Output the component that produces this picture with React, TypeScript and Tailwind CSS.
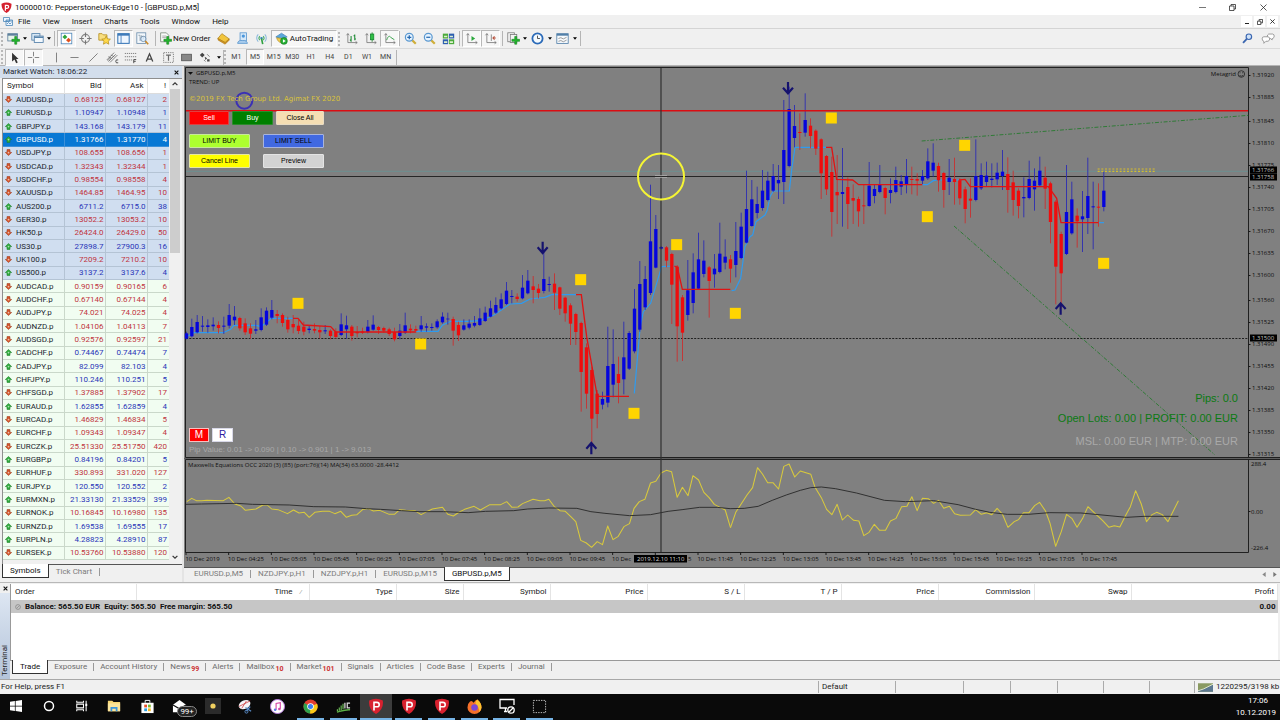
import type { ReactNode } from "react";

type Dir = "B" | "R";
type Candle = [Dir, number, number, number, number];

/* direction, high, body top, body bottom, low - in thirds of a pixel below the plot origin */
const CANDLES: Candle[] = [
  ["B", 815, 820, 836, 838], ["B", 776, 801, 829, 832], ["B", 765, 786, 817, 820], ["B", 768, 797, 800, 815],
  ["B", 778, 796, 801, 818], ["B", 772, 794, 799, 812], ["R", 784, 795, 804, 820], ["B", 770, 797, 800, 822],
  ["B", 732, 765, 797, 805], ["B", 738, 770, 781, 795], ["R", 770, 774, 805, 812], ["R", 775, 790, 817, 825],
  ["R", 790, 805, 821, 836], ["B", 780, 808, 812, 822], ["B", 745, 772, 810, 814], ["B", 742, 752, 794, 798],
  ["B", 720, 750, 773, 778], ["R", 750, 762, 768, 790], ["R", 760, 765, 789, 800], ["R", 770, 780, 808, 818],
  ["R", 765, 792, 802, 820], ["R", 780, 797, 813, 822], ["R", 785, 800, 815, 826], ["B", 795, 806, 810, 820],
  ["R", 790, 807, 812, 820], ["R", 798, 810, 817, 835], ["B", 795, 811, 814, 822], ["R", 808, 812, 828, 838],
  ["R", 805, 815, 831, 836], ["B", 760, 793, 825, 828], ["B", 767, 796, 808, 836], ["R", 795, 800, 828, 842],
  ["R", 798, 816, 820, 832], ["R", 803, 814, 818, 822], ["B", 780, 800, 816, 820], ["B", 766, 794, 809, 812],
  ["R", 798, 801, 810, 822], ["R", 800, 804, 812, 818], ["R", 803, 808, 822, 828], ["R", 803, 816, 838, 844],
  ["B", 792, 812, 828, 838], ["B", 758, 796, 818, 822], ["R", 793, 806, 811, 820], ["R", 797, 807, 812, 818],
  ["B", 768, 796, 808, 815], ["B", 790, 799, 803, 815], ["B", 790, 801, 804, 812], ["B", 778, 784, 802, 806],
  ["B", 757, 770, 787, 791], ["B", 758, 776, 778, 794], ["R", 770, 777, 812, 857], ["R", 785, 795, 826, 843],
  ["B", 778, 796, 809, 812], ["B", 778, 791, 803, 808], ["B", 768, 789, 797, 802], ["B", 745, 775, 795, 798],
  ["B", 740, 758, 783, 786], ["B", 722, 745, 770, 772], ["B", 712, 735, 758, 762], ["B", 700, 718, 745, 748],
  ["B", 666, 692, 732, 735], ["B", 690, 708, 711, 730], ["R", 700, 710, 717, 725], ["B", 645, 683, 715, 718],
  ["B", 630, 662, 700, 703], ["R", 648, 679, 690, 730], ["R", 672, 686, 699, 715], ["B", 575, 657, 693, 700],
  ["B", 650, 672, 675, 695], ["R", 640, 671, 698, 750], ["R", 680, 682, 746, 765], ["R", 710, 713, 760, 785],
  ["R", 730, 736, 791, 855], ["R", 758, 762, 816, 855], ["R", 785, 789, 936, 1055], ["R", 850, 862, 1001, 1046],
  ["R", 920, 930, 1076, 1160], ["R", 990, 1001, 1062, 1105], ["B", 995, 1017, 1034, 1048], ["B", 800, 918, 1028, 1042],
  ["B", 808, 912, 974, 1012], ["R", 890, 942, 969, 1030], ["B", 785, 892, 958, 1003], ["B", 813, 819, 926, 930],
  ["B", 687, 746, 874, 880], ["B", 603, 672, 809, 815], ["B", 618, 657, 742, 750], ["B", 374, 544, 699, 705],
  ["B", 465, 507, 623, 625], ["B", 558, 561, 566, 568], ["R", 558, 562, 602, 622], ["R", 578, 582, 674, 792],
  ["R", 615, 620, 799, 905], ["R", 705, 712, 818, 903], ["B", 600, 691, 765, 782], ["B", 580, 637, 729, 760],
  ["B", 518, 598, 686, 690], ["B", 541, 602, 642, 652], ["R", 618, 622, 663, 773], ["B", 582, 626, 643, 683],
  ["B", 488, 581, 636, 640], ["B", 538, 590, 608, 628], ["R", 585, 598, 626, 668], ["B", 486, 573, 615, 652],
  ["B", 458, 500, 594, 598], ["B", 332, 447, 548, 550], ["B", 360, 418, 498, 500], ["B", 380, 432, 459, 475],
  ["B", 330, 392, 444, 452], ["B", 335, 362, 420, 424], ["B", 312, 348, 392, 396], ["B", 315, 360, 370, 417],
  ["B", 120, 270, 366, 432], ["B", 80, 147, 318, 322], ["B", 135, 198, 234, 262], ["R", 160, 216, 219, 270],
  ["B", 100, 180, 218, 230], ["R", 175, 197, 228, 265], ["R", 208, 212, 266, 285], ["R", 235, 238, 340, 417],
  ["R", 285, 288, 388, 405], ["R", 290, 336, 456, 530], ["R", 285, 396, 406, 492], ["B", 264, 396, 402, 500],
  ["R", 352, 381, 432, 507], ["R", 373, 414, 422, 492], ["R", 410, 417, 454, 500], ["R", 373, 436, 439, 492],
  ["B", 306, 377, 438, 440], ["B", 375, 387, 408, 430], ["B", 315, 372, 396, 400], ["R", 380, 384, 414, 463],
  ["B", 355, 390, 399, 430], ["B", 320, 360, 396, 400], ["B", 345, 364, 380, 405], ["B", 297, 348, 372, 400],
  ["R", 320, 357, 360, 403], ["R", 340, 357, 362, 407], ["B", 330, 348, 362, 372], ["B", 265, 304, 355, 360],
  ["B", 250, 308, 332, 350], ["R", 308, 318, 361, 395], ["R", 335, 339, 390, 443], ["B", 297, 353, 366, 405],
  ["R", 293, 357, 366, 434], ["R", 355, 361, 415, 434], ["R", 380, 388, 447, 490], ["R", 355, 416, 422, 473],
  ["B", 238, 348, 420, 424], ["B", 310, 345, 385, 390], ["B", 305, 347, 366, 380], ["B", 310, 356, 360, 382],
  ["B", 308, 338, 358, 375], ["B", 270, 335, 348, 390], ["R", 292, 342, 390, 458], ["R", 332, 367, 420, 467],
  ["R", 385, 392, 438, 475], ["B", 352, 411, 415, 472], ["B", 302, 357, 414, 418], ["B", 325, 362, 388, 452],
  ["B", 290, 332, 376, 380], ["R", 320, 353, 386, 447], ["R", 365, 370, 486, 550], ["R", 420, 425, 620, 733],
  ["R", 515, 522, 640, 745], ["B", 315, 456, 582, 585], ["B", 365, 418, 520, 524], ["R", 445, 467, 484, 563],
  ["B", 393, 469, 478, 576], ["B", 293, 408, 474, 522], ["B", 365, 439, 442, 568], ["R", 370, 440, 443, 500],
  ["B", 335, 392, 441, 454],
];

const UP_TREND = [
  "8,830 30,818 118,818 140,808 150,796 215,796 232,800 262,775 327,775",
  "695,814 762,814 775,796 800,784 850,784 890,782 930,765 978,732 1013,730 1038,717 1083,712 1103,704 1176,704",
  "1351,1000 1368,805 1378,755 1400,730 1433,620 1471,618",
  "1643,692 1653,690 1670,655 1683,560 1698,530 1706,525 1716,485 1743,465 1750,450 1758,410 1768,393 1816,393 1823,330 1833,262 1926,262",
  "2215,374 2230,374 2248,362 2263,360 2325,360",
  "2743,488 2760,488",
];
const DOWN_TREND = [
  "327,775 342,775 358,795 440,800 455,816 695,816",
  "1176,704 1192,704 1208,830 1240,1009 1335,1009",
  "1471,618 1480,622 1495,688 1639,688",
  "1926,262 1943,262 1958,358 2006,360 2024,374 2215,374",
  "2325,360 2343,358 2359,380 2593,380 2618,415 2631,488 2743,488",
];
const SQUARES = [[342, 730], [710, 852], [1190, 659], [1350, 1060], [1478, 554], [1654, 760], [1942, 174], [2230, 470], [2342, 256], [2759, 610]];
const ARROWS = [[1076, 564, 1], [1812, 85, 1], [1222, 1164, -1], [2630, 745, -1]];

const OSC_LEFT =
  "8,140 22,130 35,137 50,137 65,136 112,137 128,127 145,147 162,153 175,166 205,162 225,150 237,150 250,162 268,164 295,176 312,165 328,174 343,172 357,187 373,172 395,169 415,169 430,176 447,169 463,187 478,181 493,179 510,163 525,161 540,168 558,166 585,178 600,178 615,164 632,166 658,167 676,179 692,170 708,162 737,157 752,178 768,183 785,171 800,163 827,154 845,165 872,149 903,149 920,140 935,157 952,156 965,146 995,133 1015,137 1028,137 1040,133 1055,154 1072,167 1087,169 1102,184 1117,200 1131,256 1147,264 1162,277 1178,260 1193,269 1208,213 1223,254 1238,244 1254,215 1270,206 1283,160 1298,140 1314,133 1330,84 1345,79 1360,54 1375,46 1390,50 1406,127 1421,97 1437,122 1451,62 1467,75 1482,112 1497,128 1512,148 1528,157 1543,165 1558,218";
const OSC_RIGHT =
  "1,218 16,172 48,120 64,98 78,38 92,57 107,83 122,83 138,102 153,34 168,27 184,66 200,48 230,58 242,97 260,128 275,163 290,179 305,148 320,195 335,180 352,196 367,198 381,242 396,232 411,208 426,226 443,226 457,198 473,190 489,155 504,154 518,125 533,167 548,130 565,131 580,145 594,136 609,160 625,154 640,176 656,181 685,180 700,164 716,178 732,173 746,179 761,160 776,177 792,217 810,200 822,194 836,173 852,173 868,152 882,142 899,168 912,205 928,274 944,230 959,178 974,190 989,217 1005,190 1020,155 1040,175 1062,197 1080,217 1095,212 1111,216 1127,182 1141,155 1156,107 1172,147 1187,200 1203,179 1216,172 1232,179 1248,200 1278,137";
const MA_LEFT =
  "5,148 50,147 100,146 150,145 195,148 300,150 370,155 460,156 520,161 560,163 620,167 670,170 740,170 810,173 860,169 940,167 980,162 1040,159 1120,160 1160,170 1200,175 1270,182 1330,179 1380,169 1420,164 1470,157 1520,157 1557,161";
const MA_RIGHT =
  "0,161 40,160 80,154 120,136 160,120 200,106 230,98 260,96 300,101 360,114 440,136 500,140 580,137 650,149 700,163 740,172 790,178 850,178 910,173 1000,174 1060,180 1130,187 1180,184 1278,184";

const PRICES: [string, number][] = [
  ["1.31920", 75], ["1.31885", 97], ["1.31845", 121], ["1.31810", 143], ["1.31775", 165], ["1.31740", 187],
  ["1.31705", 209], ["1.31670", 231], ["1.31635", 253], ["1.31600", 275], ["1.31560", 300], ["1.31525", 322],
  ["1.31490", 344], ["1.31455", 366], ["1.31420", 388], ["1.31385", 410], ["1.31350", 432], ["1.31315", 454],
];
/* the crosshair's time tag covers most of the labels for 10:25 and 11:05 */
const TIMES = [
  "10 Dec 2019", "10 Dec 04:25", "10 Dec 05:05", "10 Dec 05:45", "10 Dec 06:25", "10 Dec 07:05", "10 Dec 07:45", "10 Dec 08:25",
  "10 Dec 09:05", "10 Dec 09:45", "10 Dec", "", "10 Dec 11:45", "10 Dec 12:25", "10 Dec 13:05", "10 Dec 13:45", "10 Dec 14:25",
  "10 Dec 15:05", "10 Dec 15:45", "10 Dec 16:25", "10 Dec 17:05", "10 Dec 17:45",
];
const timeX = (i: number) => 185.4 + i * 42.667;

function PriceChart() {
  return (
    <svg viewBox="184 66 1096 501" className="block h-auto w-full bg-[#808080] font-['Open_Sans',sans-serif]" role="img" aria-label="GBPUSD.p M5 chart">
      <g stroke="#202020" fill="none">
        <path d="M185.5 457.5V67.5H1248.5V457.5M185.5 457.5H1280M185.5 459.5H1280M185.5 459.5V552.5M1248.5 459.5V552.5M185.5 552.5H1248.5" />
        <path d="M186 338.5H1248" strokeDasharray="2 1.3" />
      </g>
      <path d="M184 458.5H1280" stroke="#5e5e5e" />
      <path d="M186 171.3H1248" stroke="#5c9a9c" strokeWidth="0.6" />
      <path d="M186 176.5H1248" stroke="#262626" />

      <g transform="translate(184 60) scale(0.33333)">
        <g fill="none" stroke="#2e9bf0" strokeWidth="3.5">
          {UP_TREND.map((p) => <polyline key={p} points={p} />)}
        </g>
        <g stroke="#1f7a28" strokeWidth="2.5" strokeDasharray="12 5 4 5">
          <path d="M2213 243L3193 166" />
          <path d="M2310 498L3093 1185" />
        </g>
        {CANDLES.map(([dir, high, top, bottom, low], i) => {
          const x = 7.5 + i * 16;
          return (
            <g key={i}>
              <rect x={x - 1.3} y={high} width={2.6} height={low - high} fill={dir === "B" ? "#2a2ab4" : "#cb2e2e"} />
              <rect x={x - 5} y={top} width={10} height={bottom - top} fill={dir === "B" ? "#0505dd" : "#ee0d0d"} />
            </g>
          );
        })}
        <g fill="none" stroke="#e01414" strokeWidth="4">
          {DOWN_TREND.map((p) => <polyline key={p} points={p} />)}
        </g>
        {SQUARES.map(([x, y]) => <rect key={x} x={x - 16.5} y={y - 16.5} width={33} height={33} fill="#ffd500" />)}
        {ARROWS.map(([x, y, s]) => (
          <path key={x} transform={`translate(${x} ${y}) scale(1 ${s})`} d="M0 -19V14M-15 -2L0 15L15 -2" fill="none" stroke="#15126e" strokeWidth="6.5" />
        ))}
        <g stroke="#d6bc2c" strokeWidth="3.5" strokeDasharray="6 5">
          <path d="M2741 327H2916M2741 334H2916" />
        </g>
      </g>
      <path d="M186 110.7H1248" stroke="#da0d12" strokeWidth="1.5" />

      <g transform="translate(184 455) scale(0.35077 0.33333)" fill="none">
        <g stroke="#d8c93c" strokeWidth="3" strokeLinejoin="round">
          <polyline points={OSC_LEFT} />
          <polyline points={OSC_RIGHT} transform="translate(1557 0)" />
        </g>
        <g stroke="#262626" strokeWidth="2.6">
          <polyline points={MA_LEFT} />
          <polyline points={MA_RIGHT} transform="translate(1557 0)" />
        </g>
      </g>

      <path d="M661 68V552" stroke="#303030" strokeWidth="1.2" />
      <circle cx="661" cy="176.5" r="23" fill="none" stroke="#f5f534" strokeWidth="2" />
      <path d="M655 175.5H667M655 177.5H667" stroke="#b4b4b4" strokeWidth="0.7" />
      <circle cx="244.3" cy="100.7" r="8" fill="none" stroke="#3b31b4" strokeWidth="2" />

      <path d="M188 72H193L190.5 74.7Z" fill="#0c0c0c" />
      <g fill="#101010" fontSize="6">
        <text x="196" y="75">GBPUSD.p,M5</text>
        <text x="189" y="84">TREND: UP</text>
        <text x="1236" y="76" textAnchor="end">Metagrid</text>
        <text x="188" y="467">Maxwells Equations OCC 2020 (3) (85) (port:76)(14) MA(34) 63.0000 -28.4412</text>
      </g>
      <g fill="none" stroke="#161616" strokeWidth="0.7">
        <circle cx="1241.3" cy="74" r="3.3" />
        <path d="M1239.5 75C1240.2 76.6 1242.4 76.6 1243.1 75" />
        <path d="M1240 72.3V73.3M1242.6 72.3V73.3" />
      </g>

      {PRICES.map(([label, y]) => (
        <g key={label}>
          <path d={`M1248 ${y + 0.5}H1250.5`} stroke="#1a1a1a" />
          <text x="1252" y={y + 2} fontSize="6" fill="#0c0c0c">{label}</text>
        </g>
      ))}
      {([["1.31766", 170], ["1.31758", 177], ["1.31500", 338]] as [string, number][]).map(([label, y]) => (
        <g key={label}>
          <rect x="1250" y={y - 3.5} width="27" height="7" fill="#000" />
          <text x="1252" y={y + 2} fontSize="6" fill="#c4c4c4">{label}</text>
        </g>
      ))}
      <g fontSize="6" fill="#0c0c0c">
        <text x="1251" y="466">288.4</text>
        <text x="1251" y="514">0.00</text>
        <text x="1251" y="550">-226.4</text>
      </g>
      <path d="M1248 511.5H1250.5" stroke="#1a1a1a" />

      {TIMES.map((label, i) => (
        <g key={i}>
          <path d={`M${timeX(i) + 0.6} 552V555`} stroke="#1a1a1a" />
          {label && <text x={timeX(i)} y="561" fontSize="6" fill="#0c0c0c">{label}</text>}
        </g>
      ))}
      <rect x="634" y="555" width="53" height="7.5" fill="#000" />
      <text x="637" y="561" fontSize="6" fill="#d8d8d8">2019.12.10 11:10</text>
      <text x="688" y="561" fontSize="6" fill="#0c0c0c">5</text>
    </svg>
  );
}

const QUOTES = `AUDUSD 0.68125 0.68127 2 R
EURUSD 1.10947 1.10948 1 B
GBPJPY 143.168 143.179 11 B
GBPUSD 1.31766 1.31770 4 B
USDJPY 108.655 108.656 1 R
USDCAD 1.32343 1.32344 1 R
USDCHF 0.98554 0.98558 4 R
XAUUSD 1464.85 1464.95 10 R
AUS200 6711.2 6715.0 38 B
GER30 13052.2 13053.2 10 R
HK50 26424.0 26429.0 50 R
US30 27898.7 27900.3 16 B
UK100 7209.2 7210.2 10 R
US500 3137.2 3137.6 4 B
AUDCAD 0.90159 0.90165 6 R
AUDCHF 0.67140 0.67144 4 R
AUDJPY 74.021 74.025 4 R
AUDNZD 1.04106 1.04113 7 R
AUDSGD 0.92576 0.92597 21 R
CADCHF 0.74467 0.74474 7 B
CADJPY 82.099 82.103 4 B
CHFJPY 110.246 110.251 5 B
CHFSGD 1.37885 1.37902 17 R
EURAUD 1.62855 1.62859 4 B
EURCAD 1.46829 1.46834 5 R
EURCHF 1.09343 1.09347 4 R
EURCZK 25.51330 25.51750 420 R
EURGBP 0.84196 0.84201 5 B
EURHUF 330.893 331.020 127 R
EURJPY 120.550 120.552 2 B
EURMXN 21.33130 21.33529 399 B
EURNOK 10.16845 10.16980 135 R
EURNZD 1.69538 1.69555 17 B
EURPLN 4.28823 4.28910 87 B
EURSEK 10.53760 10.53880 120 R`.split("\n").map((line) => line.split(" "));

function TickIcon({ up }: { up: boolean }) {
  return (
    <svg viewBox="0 0 12 12" className="size-[7px] shrink-0" aria-hidden="true">
      {up ? (
        <path d="M6 .8L11.4 6L8.5 6.5V11H3.5V6.5L.6 6Z" fill="#2fae3c" stroke="#1f7c2a" />
      ) : (
        <path d="M6 11.2L.6 6L3.5 5.500V1H8.500V5.500L11.400 6Z" fill="#d8552a" stroke="#9c3a1c" />
      )}
      <circle cx="6" cy="6" r="1.5" fill="#fff" opacity=".6" />
    </svg>
  );
}

function MarketWatch() {
  return (
    <section aria-label="Market Watch" className="flex w-[184px] shrink-0 flex-col border-r-2 border-[#e4e4e4] bg-[#f0f0f0]">
      <div className="flex h-[12px] items-center justify-between bg-[#d3deec] pr-[3px] pl-[3px] text-[8px] leading-[10px] text-[#1c2733]">
        <span>Market Watch: 18:06:22</span>
        <button aria-label="Close Market Watch">
          <svg viewBox="0 0 8 8" className="size-[5px]" stroke="#111" strokeWidth="1.8"><path d="M1 1L7 7M7 1L1 7" /></svg>
        </button>
      </div>
      <div className="ml-[2px] flex grow border-t border-l border-[#8e8e8e]">
        <table className="h-[481px] w-[166px] table-fixed border-collapse bg-white text-[8px] leading-[11px]">
          <colgroup>
            <col className="w-[61px]" /><col className="w-[41px]" /><col className="w-[42px]" /><col />
          </colgroup>
          <thead>
            <tr className="border-b border-[#dcdcdc] text-[#222]">
              <th className="h-[14px] border-r border-[#e2e2e2] py-0 pl-[4px] text-left font-normal">Symbol</th>
              <th className="border-r border-[#e2e2e2] py-0 pr-[3px] text-right font-normal">Bid</th>
              <th className="border-r border-[#e2e2e2] py-0 pr-[3px] text-right font-normal">Ask</th>
              <th className="py-0 pr-[3px] text-right font-normal">!</th>
            </tr>
          </thead>
          <tbody>
            {QUOTES.map(([sym, bid, ask, spread, dir], i) => {
              const selected = i === 3;
              const row = selected ? "bg-[#0878d4] text-white" : i < 14 ? "bg-[#d0def0]" : "bg-[#f1fdf1]";
              const num = selected ? "text-white" : dir === "B" ? "text-[#2a35b8]" : "text-[#c03440]";
              const edge = selected ? "border-[#3d90d8]" : i < 14 ? "border-[#b4c3d4]" : "border-[#cad8ca]";
              return (
                <tr key={sym} className={`border-b ${row} ${edge}`}>
                  <td className={`border-r p-0 ${edge}`}>
                    <span className="flex items-center gap-[4px] pl-[2px]">
                      <TickIcon up={dir === "B"} />
                      <span className={selected ? "text-white" : "text-[#22272e]"}>{sym}.p</span>
                    </span>
                  </td>
                  <td className={`border-r py-0 pr-[1px] pl-0 text-right ${edge} ${num}`}>{bid}</td>
                  <td className={`border-r py-0 pr-[1px] pl-0 text-right ${edge} ${num}`}>{ask}</td>
                  <td className={`py-0 pr-[2px] pl-0 text-right ${num}`}>{spread}</td>
                </tr>
              );
            })}
          </tbody>
        </table>
        <div className="flex w-[11px] flex-col items-center bg-[#f0f0f0]">
          <svg viewBox="0 0 10 10" className="my-[2px] size-[6px]" fill="none" stroke="#333" strokeWidth="2"><path d="M1 7L5 3L9 7" /></svg>
          <div className="h-[164px] w-[10px] bg-[#cdcdcd]" />
          <svg viewBox="0 0 10 10" className="mt-auto mb-[4px] size-[6px]" fill="none" stroke="#333" strokeWidth="2"><path d="M1 3L5 7L9 3" /></svg>
        </div>
      </div>
      <div className="ml-[2px] flex h-[18px] items-start border-t border-[#555] text-[8px] leading-[12px]">
        <button className="-mt-px h-[14px] border border-t-0 border-[#333] bg-white px-[7px] text-[#111]">Symbols</button>
        <button className="h-[13px] px-[7px] text-[#7c7c7c]">Tick Chart</button>
        <span className="mt-[3px] h-[8px] w-px bg-[#999]" />
      </div>
    </section>
  );
}

const Ic = ({ children, className = "size-[13px]" }: { children: ReactNode; className?: string }) => (
  <svg viewBox="0 0 16 16" className={className} fill="none" stroke="#6a6a6a" aria-hidden="true">{children}</svg>
);

function Tool({ label, pressed, children, width = "w-[19px]" }: { label: string; pressed?: boolean; children: ReactNode; width?: string }) {
  return (
    <button
      aria-label={label}
      className={`flex h-[17px] shrink-0 items-center justify-center ${width} ${pressed ? "border border-[#b8b8b8] border-r-[#fff] border-b-[#fff] bg-[#f7f7f7]" : ""}`}
    >
      {children}
    </button>
  );
}
const Caret = ({ label }: { label: string }) => (
  <button aria-label={label} className="flex w-[8px] shrink-0 items-center justify-center">
    <svg viewBox="0 0 6 4" className="h-[3px] w-[4px]"><path d="M0 0H6L3 4Z" fill="#000" /></svg>
  </button>
);
const Grip = () => <span className="mx-[1px] h-[14px] w-[3px] shrink-0 border-l-2 border-dotted border-[#b8b8b8]" />;
const Sep = ({ className = "mx-[1px]" }: { className?: string }) => <span className={`h-[15px] w-px shrink-0 bg-[#b5b5b5] ${className}`} />;

const Plus = () => <path d="M9.5 5.5H12V9H15.5V11.5H12V15H9.5V11.5H6V9H9.5Z" fill="#22b52c" stroke="#12831c" strokeWidth=".7" />;
const Axes = () => <path d="M3.5 2V13H15M1.8 4L3.5 2L5.2 4M13 11.5L15 13L13 14.5" stroke="#777" />;

function MainToolbar() {
  return (
    <div className="flex h-[20px] items-center border-t border-[#d4d4d4]">
      <Grip />
      <Tool label="New chart" width="w-[16px]">
        <Ic><rect x="1" y="2" width="12" height="9" fill="#e8f4ea" stroke="#5a7d9a" /><path d="M1 3.5H13" stroke="#5a7d9a" strokeWidth="2" /><Plus /></Ic>
      </Tool>
      <Caret label="New chart options" />
      <Tool label="Profiles" width="w-[16px]">
        <Ic><rect x="1" y="2" width="10" height="8" fill="#dcebf8" stroke="#4c7ba6" /><rect x="4" y="5" width="11" height="8" fill="#f2f8fd" stroke="#4c7ba6" /><path d="M4 6.5H15" stroke="#4c7ba6" strokeWidth="1.6" /></Ic>
      </Tool>
      <Caret label="Profile options" />
      <Sep className="mr-[2px] ml-[1px]" />
      <Tool label="Market Watch" pressed>
        <Ic><rect x="1.5" y="1.5" width="13" height="13" fill="#fff" stroke="#4d87ba" /><path d="M6 3L9 6L6 9L3 6Z" fill="#2ea43a" stroke="none" /><path d="M10.5 7L13.5 10L10.5 13L7.5 10Z" fill="#e0501e" stroke="none" /></Ic>
      </Tool>
      <Tool label="Data Window">
        <Ic><circle cx="8" cy="8" r="5" stroke="#888" strokeWidth="1.4" /><path d="M8 .5V6M8 10V15.5M.5 8H6M10 8H15.5" stroke="#777" strokeWidth="1.4" /></Ic>
      </Tool>
      <Tool label="Navigator">
        <Ic><path d="M1 2H5L6.5 3.5H11V10H1Z" fill="#f9df80" stroke="#b58e1e" /><path d="M10 5L11.6 8.4L15.3 8.8L12.6 11.3L13.3 15L10 13.2L6.7 15L7.4 11.3L4.7 8.8L8.4 8.4Z" fill="#ffd94a" stroke="#b58e1e" strokeWidth=".9" /></Ic>
      </Tool>
      <Tool label="Terminal" pressed>
        <Ic><rect x="1" y="2" width="14" height="12" fill="#eef6ff" stroke="#3a78b8" strokeWidth="1.3" /><path d="M1 3.5H15" stroke="#3a78b8" strokeWidth="2" /><path d="M5 4V14" stroke="#3a78b8" /></Ic>
      </Tool>
      <Tool label="Strategy Tester">
        <Ic><rect x="1" y="1" width="11" height="13" fill="#f3f8fc" stroke="#6b8cab" /><path d="M3 4H5V11M7 4V10M9 5V9" stroke="#8a9aa8" /><circle cx="9" cy="8.5" r="3.3" fill="#dceeff" fillOpacity=".7" stroke="#6a8aa8" /><path d="M11.5 11L15 15" stroke="#c98a2a" strokeWidth="2" /></Ic>
      </Tool>
      <Sep className="mr-[3px] ml-[3px]" />
      <button className="flex h-[17px] w-[55px] shrink-0 items-center gap-[1px] text-[8px] leading-[12px] whitespace-nowrap text-[#111]">
        <Ic><path d="M2 1H9L12 4V12H2Z" fill="#fafafa" stroke="#7a8a7a" /><path d="M4 5H9M4 7H9" stroke="#999" /><Plus /></Ic>
        New Order
      </button>
      <Tool label="MetaEditor">
        <Ic><path d="M6 2L15 8.5L10 13L1 8Z" fill="#f2c53c" stroke="#b58a22" /><path d="M1 8L1.5 10L10 15L15 10V8.5L10 13Z" fill="#d89a20" stroke="#a6741a" strokeWidth=".7" /></Ic>
      </Tool>
      <Tool label="Community">
        <Ic><rect x="5" y="1" width="8" height="10" fill="#d6e8f8" stroke="#5a96ce" /><circle cx="9" cy="5" r="2" fill="#4a96dc" stroke="none" /><path d="M2 14C2 11 5 10 8 10.5C12 10 14 12 14 14Z" fill="#a9cdee" stroke="#5a96ce" /></Ic>
      </Tool>
      <Tool label="Signals">
        <Ic><path d="M4 12C1.5 9.500 1.500 5.500 4 3M12 3C14.500 5.500 14.500 9.500 12 12" stroke="#8ab8dc" strokeWidth="1.3" /><path d="M6 10C4.5 8.500 4.500 6.500 6 5M10 5C11.500 6.500 11.500 8.500 10 10" stroke="#4fae6c" strokeWidth="1.3" /><circle cx="8" cy="7.5" r="1.5" fill="#2f80c0" stroke="none" /><path d="M8 8L9.5 15" stroke="#2fa040" strokeWidth="2" /></Ic>
      </Tool>
      <button className="flex h-[17px] w-[66px] shrink-0 items-center justify-center gap-[2px] border border-[#b8b8b8] border-r-[#fff] border-b-[#fff] bg-[#f7f7f7] text-[8px] leading-[12px] text-[#111]">
        <Ic><path d="M1 6L8 1.500L15 6L8 9Z" fill="#5aa8dc" stroke="#3c7cb4" strokeWidth=".8" /><path d="M2 7C3 12 7 14 10 13L9 8Z" fill="#f0cc50" stroke="#b08c2a" strokeWidth=".8" /><circle cx="11" cy="11" r="4.2" fill="#25b035" stroke="#14751f" strokeWidth=".7" /><path d="M9.8 8.800V13.200L13.200 11Z" fill="#fff" stroke="none" /></Ic>
        AutoTrading
      </button>
      <Grip />
      <Tool label="Bar chart"><Ic><Axes /><path d="M7.5 5V12M6 10H7.5M12 3V10M10.500 4.500H12M12 8.500H13.500" stroke="#1d8a34" strokeWidth="1.3" /></Ic></Tool>
      <Tool label="Candlesticks"><Ic><Axes /><path d="M10 .5V12" stroke="#14751f" /><rect x="8" y="2.5" width="4" height="7" fill="#2fbf45" stroke="#148a2f" /></Ic></Tool>
      <Tool label="Line chart" pressed><Ic><Axes /><path d="M4.5 10C6 5 8 4 10 7L14 9.500" stroke="#3aa04c" strokeWidth="1.2" /></Ic></Tool>
      <Sep className="mr-[1px]" />
      <Tool label="Zoom in"><Ic><path d="M9.5 9.500L14.500 14.500" stroke="#cfae3a" strokeWidth="2.8" /><circle cx="6.5" cy="6.5" r="4.8" fill="#e6f3ff" stroke="#5a98d0" strokeWidth="1.5" /><path d="M4 6.5H9M6.500 4V9" stroke="#2468b0" strokeWidth="1.5" /></Ic></Tool>
      <Tool label="Zoom out"><Ic><path d="M9.5 9.500L14.500 14.500" stroke="#cfae3a" strokeWidth="2.8" /><circle cx="6.5" cy="6.5" r="4.8" fill="#e6f3ff" stroke="#5a98d0" strokeWidth="1.5" /><path d="M4 6.5H9" stroke="#2468b0" strokeWidth="1.5" /></Ic></Tool>
      <Tool label="Tile windows"><Ic><g stroke="none"><path d="M1 2H7.5V8H1Z" fill="#4cab3c" /><path d="M8.5 2H15V8H8.500Z" fill="#2e5fb0" /><path d="M1 9H7.5V15H1Z" fill="#2e5fb0" /><path d="M8.5 9H15V15H8.500Z" fill="#4cab3c" /><path d="M2.5 4.500H6.500V6.500H2.500ZM9.500 4.500H13.500V6.500H9.500ZM2.500 11.500H6.500V13.500H2.500ZM9.500 11.500H13.500V13.500H9.500Z" fill="#dff0d0" /></g></Ic></Tool>
      <Sep className="mr-[2px] ml-[1px]" />
      <Tool label="Auto scroll" pressed><Ic><Axes /><path d="M8 5V11L12.500 8Z" fill="#2aa83c" stroke="none" /></Ic></Tool>
      <Tool label="Chart shift" pressed><Ic><Axes /><path d="M9 3V11" stroke="#777" /><path d="M14.5 7.500H11.500M13 5.500L11 7.500L13 9.500" stroke="#b85540" strokeWidth="1.3" /></Ic></Tool>
      <Sep className="mr-[2px] ml-[2px]" />
      <Tool label="Indicators" width="w-[16px]"><Ic><rect x="1" y="1" width="8" height="11" fill="#fff" stroke="#777" /><rect x="4" y="3" width="8" height="10" fill="#f4f4f4" stroke="#777" /><Plus /></Ic></Tool>
      <Caret label="Indicator options" />
      <Tool label="Periods" width="w-[17px]"><Ic><circle cx="8" cy="8" r="6.3" fill="#f4faff" stroke="#2a6ab8" strokeWidth="2.2" /><path d="M8 4.5V8H11" stroke="#333" /></Ic></Tool>
      <Caret label="Period options" />
      <Tool label="Templates" width="w-[17px]"><Ic><rect x="1" y="2" width="14" height="12" fill="#f6fafd" stroke="#4c7ba6" /><path d="M1 3.5H15" stroke="#4c7ba6" strokeWidth="2" /><path d="M3 8L6 7L9 8.500L13 6.500M3 11.500L6 10.500L9 12L13 10" stroke="#888" /></Ic></Tool>
      <Caret label="Template options" />
      <Sep />
      <span className="ml-auto flex items-center gap-[8px] pr-[5px]">
        <button aria-label="Search"><Ic className="size-[11px]"><circle cx="10" cy="5.5" r="4" fill="#cfe2f8" stroke="#3a66b0" strokeWidth="1.7" /><path d="M7 8.5L1.500 14.500" stroke="#3a66b0" strokeWidth="2.6" /></Ic></button>
        <button aria-label="Messages"><svg viewBox="0 0 20 16" className="h-[11px] w-[14px]" fill="#fff" stroke="#777"><path d="M11 1.5H17Q19 2 19 4.500T17 8H16V10L13.500 8H11Q9 7.500 9 5T11 1.500Z" /><path d="M4 5.5H10Q12.500 6 12.500 8.500T10 12H7L4 15V12Q1.500 11.500 1.500 8.500T4 5.500Z" /></svg></button>
      </span>
    </div>
  );
}

const PERIODS = ["M1", "M5", "M15", "M30", "H1", "H4", "D1", "W1", "MN"];

function LineToolbar() {
  return (
    <div className="flex h-[18px] items-center border-t border-b border-t-[#dadada] border-b-[#b4b4b4]">
      <Grip />
      <Tool label="Cursor" pressed><Ic><path d="M5 2V13L8 10.500L10 15L12 14L10 9.800H13Z" fill="#333" stroke="none" /></Ic></Tool>
      <Tool label="Crosshair" pressed><Ic><path d="M8 1V6.5M8 9.500V15M1 8H6.500M9.500 8H15" /></Ic></Tool>
      <div className="ml-[4px] grid w-[168px] shrink-0 grid-cols-9">
        <Tool width="w-full" label="Vertical line"><Ic><path d="M8 2V14" /></Ic></Tool>
        <Tool width="w-full" label="Horizontal line"><Ic><path d="M3 8H13" /></Ic></Tool>
        <Tool width="w-full" label="Trendline"><Ic><path d="M3 13L13 3" /></Ic></Tool>
        <Tool width="w-full" label="Equidistant channel"><Ic><path d="M1 11L10 2M3 13L12 4M5 14L14 5M3 7L7 9M6 5L10 7M2 12L6 8" /><path d="M15 11Q12 10 12 12.7T15 14.500" stroke="#333" /></Ic></Tool>
        <Tool width="w-full" label="Fibonacci retracement"><Ic><path d="M1 3H15M1 7H15M1 11H10" strokeDasharray="1.5 1" /><path d="M12 15V10.5H15M12 12.700H14.500" stroke="#333" /></Ic></Tool>
        <Tool width="w-full" label="Text"><Ic><path d="M4 13L8 3.5L12 13M5.500 10H10.500" stroke="#444" strokeWidth="1.6" /></Ic></Tool>
        <Tool width="w-full" label="Text label"><Ic><rect x="2" y="2" width="12" height="12" strokeDasharray="1.5 1.2" /><path d="M5 5H11M8 5V12" strokeWidth="1.5" /></Ic></Tool>
        <Tool width="w-full" label="Rectangle"><Ic><rect x="2" y="4" width="12" height="8" fill="#888" stroke="#555" /></Ic></Tool>
        <Tool width="w-full" label="Arrows"><Ic><path d="M4 2L7 5L4 8L1 5ZM10 10H13V13H10ZM7 7L10 9L8 11Z" fill="#444" stroke="none" /><path d="M6 11L8 13M10 4L13 7" /></Ic></Tool>
      </div>
      <Caret label="Arrow options" />
      <Sep className="" />
      <span className="h-[14px] w-[3px] shrink-0 border-l-2 border-dotted border-[#b8b8b8]" />
      <div className="grid w-[168px] shrink-0 grid-cols-9 text-[7px] leading-[10px] text-[#444]">
        {PERIODS.map((p) => (
          <button key={p} className={`h-[16px] ${p === "M5" ? "border border-[#b8b8b8] border-r-[#fff] border-b-[#fff] bg-[#f7f7f7]" : ""}`}>{p}</button>
        ))}
      </div>
      <Sep />
    </div>
  );
}

function TitleBar() {
  return (
    <header>
      <div className="flex h-[15px] items-center bg-white pl-[1px] text-[8px] leading-[12px] text-[#111]">
        <svg viewBox="0 0 20 20" className="mr-[3px] size-[11px]"><path d="M1 3Q10 -1 19 3Q20 14 10 20Q0 14 1 3Z" fill="#d5202e" /><path d="M8 16V6H11Q14 6 14 8.7T11 11.4H8" fill="none" stroke="#fff" strokeWidth="2.2" /></svg>
        <span>10000010: PepperstoneUK-Edge10 - [GBPUSD.p,M5]</span>
        <div className="ml-auto flex">
          <button aria-label="Minimise" className="flex w-[31px] items-center justify-center"><span className="h-px w-[7px] bg-[#777]" /></button>
          <button aria-label="Restore" className="flex w-[29px] items-center justify-center"><svg viewBox="0 0 14 14" className="size-[7px]" fill="none" stroke="#222" strokeWidth="1.5"><path d="M1 4H10V13H1ZM4 4V1H13V10H10" /></svg></button>
          <button aria-label="Close" className="flex w-[33px] items-center justify-center"><svg viewBox="0 0 14 14" className="size-[7px]" stroke="#222" strokeWidth="1.5"><path d="M1 1L13 13M13 1L1 13" /></svg></button>
        </div>
      </div>
      <nav className="flex h-[13px] items-center pl-[3px] text-[8px] leading-[12px] text-[#111]">
        <svg viewBox="0 0 20 18" className="mr-[5px] h-[9px] w-[10px]" fill="#eef6ff" stroke="#4a86b8" strokeWidth="1.6"><path d="M1 1H13V9H1ZM6 6H19V17H6Z" /><path d="M6 8H19M8 14L11 11L14 14L17 11" fill="none" /></svg>
        {["File", "View", "Insert", "Charts", "Tools", "Window", "Help"].map((m) => (
          <button key={m} className="mr-[12px]">{m}</button>
        ))}
        <div className="ml-auto flex gap-[2px] pr-[2px] text-[#222]">
          <button aria-label="Minimise chart" className="flex size-[11px] items-center justify-center bg-white"><span className="mt-[3px] h-px w-[4px] bg-[#222]" /></button>
          <button aria-label="Restore chart" className="flex size-[11px] items-center justify-center bg-white"><svg viewBox="0 0 14 14" className="size-[6px]" fill="none" stroke="#333" strokeWidth="2"><path d="M1 5H9V13H1ZM5 5V1H13V9H9" /></svg></button>
          <button aria-label="Close chart" className="flex size-[11px] items-center justify-center bg-white"><svg viewBox="0 0 14 14" className="size-[5px]" stroke="#222" strokeWidth="2.4"><path d="M1 1L13 13M13 1L1 13" /></svg></button>
        </div>
      </nav>
    </header>
  );
}

function TradeButtons() {
  const base = "h-[14px] rounded-[1px] border text-center text-[7px] leading-[12px]";
  return (
    <div className="absolute top-[45px] left-[5px] font-['Liberation_Sans',Arial,sans-serif] text-black">
      <div className="flex gap-[3px]">
        <button className={`${base} w-[40px] border-[#e04040] bg-[#ff0000] text-white`}>Sell</button>
        <button className={`${base} w-[41px] border-[#2c8c2c] bg-[#008000] text-white`}>Buy</button>
        <button className={`${base} w-[48px] border-[#e8dcc4] bg-[#f5deb3]`}>Close All</button>
      </div>
      <div className="mt-[9px] grid w-[135px] grid-cols-[61px_61px] justify-between gap-y-[6px]">
        <button className={`${base} border-[#c8e89c] bg-[#adff2f]`}>LIMIT BUY</button>
        <button className={`${base} border-[#a8b4dc] bg-[#4169e1]`}>LIMIT SELL</button>
        <button className={`${base} border-[#e8e8a0] bg-[#ffff00]`}>Cancel Line</button>
        <button className={`${base} border-[#e4e4e4] bg-[#d3d3d3]`}>Preview</button>
      </div>
    </div>
  );
}

function ChartWindow() {
  return (
    <main className="min-w-0 grow">
      <div className="relative">
        <PriceChart />
        <p className="absolute top-[28px] left-[5px] font-['DejaVu_Sans',sans-serif] text-[7px] leading-[10px] whitespace-nowrap text-[#d9c23a]">©2019 FX Tech Group Ltd. Agimat FX 2020</p>
        <TradeButtons />
        <div className="absolute bottom-[112px] left-[5px] font-['Liberation_Sans',Arial,sans-serif]">
          <div className="flex gap-[3px] text-[10px] leading-[12px]">
            <button className="h-[14px] w-[20px] border border-[#f8c0c0] bg-[#ff0000] text-white">M</button>
            <button className="h-[14px] w-[21px] border border-[#d8d8e8] bg-white text-[#2a20a0]">R</button>
          </div>
          <p className="mt-[3px] text-[8px] leading-[10px] whitespace-nowrap text-[#a9a9a9]">{"Pip Value: 0.01 -> 0.090 | 0.10 -> 0.901 | 1 -> 9.013"}</p>
        </div>
        <div className="absolute right-[42px] bottom-[116px] text-right font-['Liberation_Sans',Arial,sans-serif] text-[11px] leading-[20px] text-[#0b7a12]">
          <p>Pips: 0.0</p>
          <p>Open Lots: 0.00 | PROFIT: 0.00 EUR</p>
          <p className="mt-[3px] text-[#a9a9a9]">MSL: 0.00 EUR | MTP: 0.00 EUR</p>
        </div>
      </div>
      <div className="flex h-[15px] items-start border-t border-[#555] pl-[3px] text-[8px] leading-[12px] text-[#7c7c7c]">
        {["EURUSD.p,M5", "NZDJPY.p,H1", "NZDJPY.p,H1", "EURUSD.p,M15"].map((t, i) => (
          <div key={i} className="flex items-center">
            {i > 0 && <span className="h-[8px] w-px bg-[#999]" />}
            <button className="px-[7px]">{t}</button>
          </div>
        ))}
        <button className="-mt-px h-[14px] border border-t-0 border-[#333] bg-white px-[7px] text-[#111]">GBPUSD.p,M5</button>
        <div className="mt-[4px] mr-[3px] ml-auto flex gap-[7px]">
          <button aria-label="Scroll tabs left"><svg viewBox="0 0 4 6" className="h-[5px] w-[4px]"><path d="M4 0V6L0 3Z" fill="#888" /></svg></button>
          <button aria-label="Scroll tabs right"><svg viewBox="0 0 4 6" className="h-[5px] w-[4px]"><path d="M0 0V6L4 3Z" fill="#777" /></svg></button>
        </div>
      </div>
    </main>
  );
}

const COLUMNS: [string, string][] = [
  ["Order", "w-[125px]"], ["Time", "w-[173px]"], ["Type", "w-[87px]"], ["Size", "w-[67px]"], ["Symbol", "w-[87px]"], ["Price", "w-[97px]"],
  ["S / L", "w-[97px]"], ["T / P", "w-[97px]"], ["Price", "w-[97px]"], ["Commission", "w-[96px]"], ["Swap", "w-[97px]"], ["Profit", ""],
];
const TERMINAL_TABS: [string, string][] = [
  ["Exposure", ""], ["Account History", ""], ["News", "99"], ["Alerts", ""], ["Mailbox", "10"], ["Market", "101"],
  ["Signals", ""], ["Articles", ""], ["Code Base", ""], ["Experts", ""], ["Journal", ""],
];

function Terminal() {
  return (
    <section aria-label="Terminal" className="flex h-[97px] border-t border-[#b8b8b8] pt-px text-[8px] leading-[12px]">
      <div className="flex w-[10px] shrink-0 flex-col items-center">
        <button aria-label="Close Terminal" className="my-[2px]">
          <svg viewBox="0 0 8 8" className="size-[5px]" stroke="#111" strokeWidth="1.8"><path d="M1 1L7 7M7 1L1 7" /></svg>
        </button>
        <div className="flex w-full grow items-end justify-center bg-linear-to-b from-[#dde6f2] to-[#b4c4da] pb-[3px] leading-[10px] text-[#222]">
          <span className="rotate-180 [writing-mode:vertical-rl]">Terminal</span>
        </div>
      </div>
      <div className="flex min-w-0 grow flex-col">
        <div className="mr-[2px] grow border-l border-[#999] bg-white">
          <table className="w-full table-fixed border-collapse">
            <colgroup>{COLUMNS.map(([, w], i) => <col key={i} className={w} />)}</colgroup>
            <thead>
              <tr className="h-[16px] text-[#222]">
                {COLUMNS.map(([c], i) => (
                  <th key={i} className={`border-r border-[#e4e4e4] p-0 font-normal ${i === 0 ? "pl-[4px] text-left" : "pr-[3px] text-right"}`}>
                    {c}
                    {c === "Time" && <span className="mr-[4px] ml-[8px] text-[6px] text-[#777]">∕</span>}
                  </th>
                ))}
              </tr>
            </thead>
            <tbody>
              <tr className="h-[13px] bg-[#c6c6c6] font-bold text-[#111]">
                <td colSpan={11} className="p-0">
                  <span className="flex items-center gap-[4px] pl-[4px] whitespace-pre">
                    <svg viewBox="0 0 10 10" className="size-[6px]" fill="none" stroke="#777"><circle cx="5" cy="5" r="4" /><path d="M3 7L7 3" /></svg>
                    Balance: 565.50 EUR  Equity: 565.50  Free margin: 565.50
                  </span>
                </td>
                <td className="py-0 pr-[2px] pl-0 text-right">0.00</td>
              </tr>
            </tbody>
          </table>
        </div>
        <div className="flex h-[19px] items-start border-t border-[#999] pl-[2px] text-[#6c6c6c]">
          <button className="-mt-px h-[14px] border border-t-0 border-[#333] bg-white px-[7px] text-[#111]">Trade</button>
          {TERMINAL_TABS.map(([t, n]) => (
            <div key={t} className="flex items-center">
              <button className="px-[6px]">{t}{n && <span className="relative top-[2px] ml-px text-[7px] font-bold text-[#cc3030]">{n}</span>}</button>
              <span className="h-[8px] w-px bg-[#999]" />
            </div>
          ))}
        </div>
      </div>
    </section>
  );
}

function StatusBar() {
  return (
    <footer className="flex h-[15px] items-center border-t border-[#a8a8a8] pl-[1px] text-[8px] leading-[12px] text-[#222]">
      <span className="grow">For Help, press F1</span>
      <span className="h-[12px] w-[77px] border-l border-[#aaa] pl-[3px]">Default</span>
      <span className="h-[12px] w-[68px] border-l border-[#aaa]" />
      <span className="h-[12px] w-[47px] border-l border-[#aaa]" />
      <span className="h-[12px] w-[47px] border-l border-[#aaa]" />
      <span className="h-[12px] w-[46px] border-l border-[#aaa]" />
      <span className="h-[12px] w-[46px] border-l border-[#aaa]" />
      <span className="h-[12px] w-[45px] border-l border-[#aaa]" />
      <span className="flex h-[12px] w-[86px] items-center gap-[3px] border-l border-[#aaa] pl-[3px] whitespace-nowrap">
        <svg viewBox="0 0 16 9" className="h-[9px] w-[15px]"><rect width="16" height="9" fill="#8a9a62" /><path d="M0 9V7.5L6 6L16 1V9Z" fill="#5c7890" /><path d="M0 8L6 6L16 1" fill="none" stroke="#e4ecd0" /></svg>
        1220295/3198 kb
      </span>
    </footer>
  );
}

const Pepper = () => (
  <svg viewBox="0 0 20 20" className="size-[16px]"><path d="M1.5 3Q10 -1 18.5 3Q20 14 10 20Q0 14 1.5 3Z" fill="#d8212f" /><path d="M7.500 15.500V5.500H11Q14 5.500 14 8.300T11 11H8" fill="none" stroke="#fff" strokeWidth="2" /></svg>
);

const TASKS: { label: string; running?: boolean; active?: boolean; icon: ReactNode }[] = [
  { label: "Start", icon: <svg viewBox="0 0 16 16" className="size-[12px]" fill="#fff"><path d="M0 2.3L6.5 1.4V7.5H0ZM7.5 1.2L16 0V7.5H7.5ZM0 8.5H6.5V14.6L0 13.7ZM7.5 8.5H16V16L7.5 14.8Z" /></svg> },
  { label: "Cortana", icon: <svg viewBox="0 0 16 16" className="size-[12px]" fill="none" stroke="#fff" strokeWidth="2"><circle cx="8" cy="8" r="6" /></svg> },
  { label: "Task view", icon: <svg viewBox="0 0 16 16" className="size-[12px]" fill="none" stroke="#fff" strokeWidth="1.4"><path d="M1 1V3H10V1M1 15V13H10V15M1 5.5H10V10.5H1ZM13.5 1V15" /><path d="M12.5 5H15V8H12.5Z" fill="#fff" stroke="none" /></svg> },
  { label: "File Explorer", icon: <svg viewBox="0 0 16 16" className="size-[14px]"><path d="M1 2H6L7.5 3.5H15V14H1Z" fill="#f8d775" /><path d="M1 5H15V14H1Z" fill="#fbe59c" /><path d="M4 14V9H12V14H10V11H6V14Z" fill="#3c96dc" /></svg> },
  { label: "Store", icon: <svg viewBox="0 0 16 16" className="size-[15px]"><path d="M5.5 4V1.5H10.5V4" fill="none" stroke="#fff" /><path d="M1.5 4H14.5V15H1.5Z" fill="#fff" /><path d="M4.5 6H7.5V9H4.5Z" fill="#e8502a" /><path d="M8.5 6H11.5V9H8.5Z" fill="#7cb82c" /><path d="M4.5 10H7.5V13H4.5Z" fill="#2a9fe0" /><path d="M8.5 10H11.5V13H8.5Z" fill="#f8b820" /></svg> },
  { label: "Mail, 99+", icon: <span className="relative"><svg viewBox="0 0 16 16" className="size-[15px]"><path d="M1 6L8 1L15 6V14H1Z" fill="#fff" /><path d="M1 6.5L8 10.5L15 6.5" fill="none" stroke="#111" strokeWidth="1.3" /></svg><span className="absolute top-[7px] left-[5px] rounded-full border border-[#888] bg-[#222] px-[2px] text-[8px] leading-[9px] text-white">99+</span></span> },
  { label: "Music player", icon: <svg viewBox="0 0 16 16" className="size-[16px]"><rect width="16" height="16" fill="#2b2b2b" /><circle cx="8" cy="8" r="2.6" fill="#f0d060" /></svg> },
  { label: "Snipping tool", icon: <svg viewBox="0 0 16 16" className="size-[15px]"><ellipse cx="7" cy="6" rx="6.5" ry="4.5" transform="rotate(-25 7 6)" fill="#f4f4f8" /><path d="M1 8L13 2M4 10L9 2" stroke="#c33" strokeWidth=".8" /><path d="M8 9L14 13M9 13L13 8" stroke="#5a8cc8" strokeWidth="1.3" /><circle cx="9" cy="13.5" r="1.6" fill="none" stroke="#5a8cc8" /></svg> },
  { label: "iTunes", icon: <svg viewBox="0 0 16 16" className="size-[15px]"><circle cx="8" cy="8" r="7.5" fill="#fff" stroke="#b77be0" /><path d="M6.5 11.5V4.8L11 3.9V10.5" fill="none" stroke="#d648a8" strokeWidth="1.2" /><circle cx="5.5" cy="11.5" r="1.4" fill="#5a78e8" /><circle cx="10" cy="10.6" r="1.4" fill="#d648a8" /></svg> },
  { label: "Chrome", running: true, icon: <svg viewBox="0 0 16 16" className="size-[15px]"><circle cx="8" cy="8" r="7.5" fill="#e23c30" /><path d="M8 8L1.5 4.3A7.5 7.5 0 0 0 7.5 15.5L11.2 9.8Z" fill="#2fa24c" /><path d="M8 8L15 5A7.5 7.5 0 0 1 7.5 15.5Z" fill="#fbc916" /><circle cx="8" cy="8" r="3.5" fill="#fff" /><circle cx="8" cy="8" r="2.7" fill="#3f80ee" /></svg> },
  { label: "IC Markets", running: true, icon: <svg viewBox="0 0 16 16" className="size-[15px]"><path d="M1 14C5 13 10 11 15 11.5" fill="none" stroke="#5db347" strokeWidth="1.5" /><path d="M1.500 11V13M3.500 9V12.500M5.500 7V12M7.500 5V11" stroke="#6fc25a" strokeWidth="1.2" /><path d="M9.500 4V10M15 4.500H12V9.500H15" stroke="#e0e0e0" strokeWidth="1.3" fill="none" /></svg> },
  { label: "Pepperstone MT4", running: true, active: true, icon: <Pepper /> },
  { label: "Pepperstone MT4 (2)", running: true, icon: <Pepper /> },
  { label: "Pepperstone MT4 (3)", running: true, icon: <Pepper /> },
  { label: "Firefox", running: true, icon: <svg viewBox="0 0 16 16" className="size-[15px]"><path d="M3 3Q5 1 7 4Q9 1 11 .5Q15.5 4 15.5 9A7.5 7 0 0 1 .5 9Q.5 5 3 3Z" fill="#f5702a" /><path d="M11 .5Q15.5 4 15.5 9Q15 12 13 14Q13 8 9 5Q9 2 11 .5Z" fill="#fcc22e" /><circle cx="8" cy="9" r="3.5" fill="#7a48d8" /></svg> },
  { label: "Remote display", running: true, icon: <svg viewBox="0 0 16 16" className="size-[16px]" fill="none" stroke="#fff" strokeWidth="1.3"><path d="M8 10H1V1.5H15V7M5 13.5H8M6.5 10V13.5" /><circle cx="12" cy="12" r="3.2" /><path d="M10 14L14 10" /></svg> },
  { label: "Selection capture", running: true, icon: <svg viewBox="0 0 16 16" className="size-[15px]" fill="none" stroke="#c4c4c4" strokeDasharray="1.5 1.2"><rect x="1.5" y="1.5" width="13" height="13" /></svg> },
];

function Taskbar() {
  return (
    <div className="flex h-[26px] items-center bg-[#0a0a0a]">
      <div className="grid w-[556px] grid-cols-17">
        {TASKS.map((t) => (
          <button
            key={t.label}
            aria-label={t.label}
            className={`flex h-[26px] flex-col items-center ${t.active ? "bg-[#3c3c3c]" : ""}`}
          >
            <span className="flex grow items-center">{t.icon}</span>
            <span className={`h-[2px] ${t.active ? "w-full" : "w-[27px]"} ${t.running ? "bg-[#76b4e6]" : ""}`} />
          </button>
        ))}
      </div>
      <div className="mr-[4px] ml-auto flex flex-col items-end text-[8px] leading-[12px] text-white">
        <span className="pr-[8px]">17:06</span>
        <span>10.12.2019</span>
      </div>
    </div>
  );
}

export default function App() {
  return (
    <div className="flex min-h-screen flex-col bg-[#f0f0f0] font-['Roboto','Noto_Sans',sans-serif]">
      <TitleBar />
      <MainToolbar />
      <LineToolbar />
      <div className="flex grow items-stretch">
        <MarketWatch />
        <ChartWindow />
      </div>
      <Terminal />
      <StatusBar />
      <Taskbar />
    </div>
  );
}
